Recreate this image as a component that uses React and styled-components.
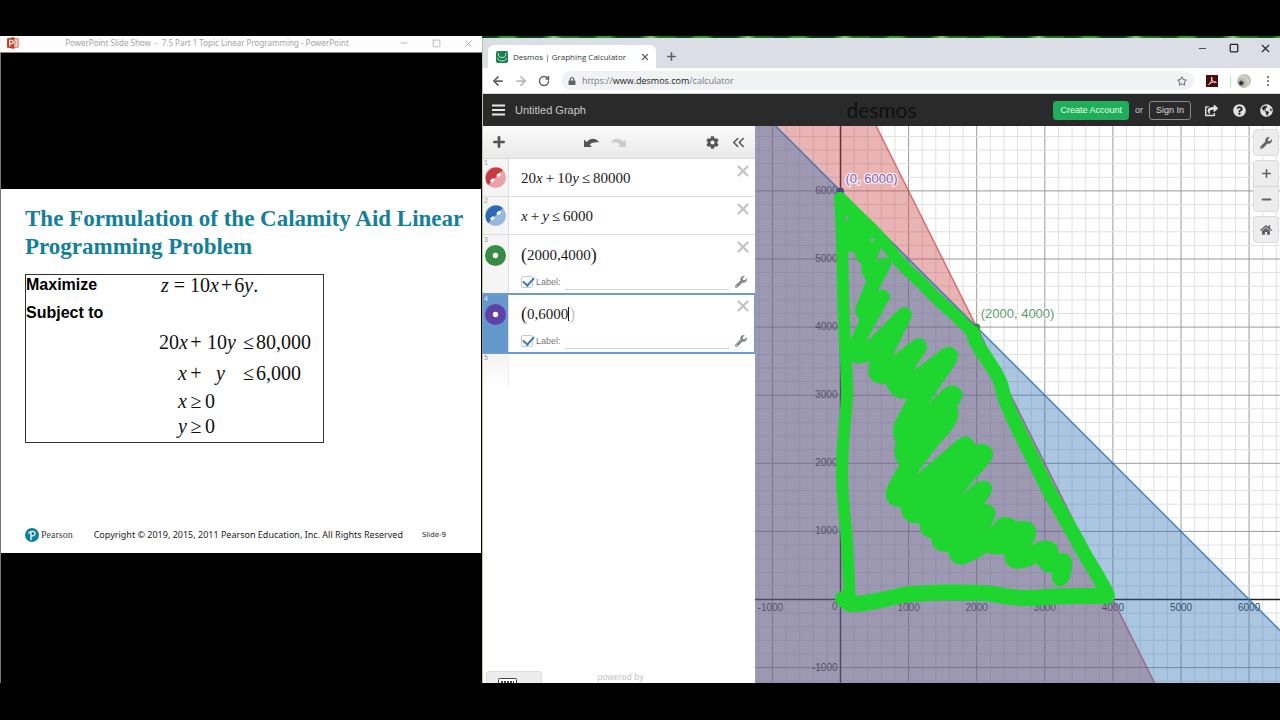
import React from 'react';
import styled, { createGlobalStyle, css } from 'styled-components';
import {
  FaCog,
  FaGlobeAmericas,
  FaHome,
  FaLock,
  FaQuestionCircle,
  FaRegStar,
  FaShareSquare,
  FaWrench,
} from 'react-icons/fa';
import { ArrowLeft, ArrowRight, ChevronsLeft, Minus, Plus, RotateCw, Square, X } from 'lucide-react';

const GlobalStyle = createGlobalStyle`
  * {
    box-sizing: border-box;
  }
  body {
    margin: 0;
    background: #000;
    font-family: 'Liberation Sans', Arial, sans-serif;
  }
  button {
    font-family: inherit;
    cursor: pointer;
  }
  svg {
    flex: none;
  }
`;

const uiFont = "'Noto Sans', 'Open Sans', sans-serif";
const mathFont = "'Liberation Serif', 'Times New Roman', serif";

/* ---------- shared ---------- */

const Screen = styled.div`
  display: flex;
  height: 100vh;
  padding: 36px 0 37px;
  overflow: hidden;
  background: #000;
`;

const IconButton = styled.button`
  display: flex;
  align-items: center;
  justify-content: center;
  flex: none;
  width: ${(p) => p.$w || 24}px;
  height: ${(p) => p.$h || 24}px;
  padding: 0;
  border: 0;
  background: transparent;
  color: ${(p) => p.$color || '#5f6368'};
`;

/* ---------- PowerPoint ---------- */

const SlideWindow = styled.section`
  display: flex;
  flex-direction: column;
  flex: 482 1 0;
  min-width: 0;
`;

const TitleBar = styled.header`
  display: flex;
  align-items: center;
  height: 17px;
  padding: 0 0 2px 7px;
  background: #fdfdfd;
  border-bottom: 1px solid #8a8a8a;
`;

const WindowTitle = styled.h1`
  flex: 1;
  margin: 0;
  padding-left: 5px;
  font: 400 8px/14px ${uiFont};
  color: #a3a3a3;
  text-align: center;
  white-space: pre;
`;

const WindowActions = styled.div`
  display: flex;
  width: 92px;
  justify-content: space-between;
`;

const Stage = styled.div`
  display: flex;
  flex: 1;
  flex-direction: column;
  justify-content: center;
  padding: 6px 1px 0 0;
  border-left: 1px solid #777;
`;

const Slide = styled.article`
  display: flex;
  flex-direction: column;
  height: 364px;
  padding: 16px 16px 8px 24px;
  background: #fff;
`;

const SlideTitle = styled.h2`
  margin: 0;
  font: 700 23px/28px ${mathFont};
  color: #13809a;
`;

const ProblemBox = styled.div`
  display: grid;
  grid-template-columns: 133px 1fr;
  grid-template-rows: 20px 35px 24px 38px 18px 32px;
  align-items: center;
  width: 299px;
  margin-top: 13px;
  border: 1px solid #333;
`;

const ProblemLabel = styled.strong`
  grid-column: 1;
  font-size: 16px;
  line-height: 20px;
  color: #000;
`;

const Formula = styled.div`
  grid-column: 2;
  padding-left: 2px;
  font: 400 20px/24px ${mathFont};
  color: #111;
`;

const Sign = styled.span`
  margin: 0 2px;
`;

const Constraint = styled(Formula)`
  display: grid;
  grid-template-columns: 28px 18px 31px 1fr;
  padding-left: 0;
`;

const Term = styled.span`
  text-align: ${(p) => p.$align || 'left'};
  padding-left: ${(p) => (p.$relation ? 5 : 0)}px;
  white-space: nowrap;
`;

const SlideFooter = styled.footer`
  display: flex;
  align-items: center;
  margin-top: auto;
  height: 20px;
  white-space: nowrap;
  color: #222;
`;

const PearsonName = styled.span`
  margin: 0 21px 0 2px;
  font: 400 10px/14px ${mathFont};
  color: #444;
`;

const Copyright = styled.span`
  font: 400 9px/12px ${uiFont};
`;

const SlideNumber = styled.span`
  margin-left: 19px;
  font: 400 7px/12px 'DejaVu Sans', sans-serif;
`;

/* ---------- browser chrome ---------- */

const BrowserWindow = styled.section`
  display: flex;
  flex-direction: column;
  flex: 798 1 0;
  min-width: 0;
`;

const Wallpaper = styled.div`
  flex: none;
  height: 2px;
  background: repeating-linear-gradient(90deg, #0d4a12 0 14px, #2f9a2c 20px 31px, #0b3a10 38px 60px, #7bcf6a 72px, #15701b 80px 97px);
`;

const TabStrip = styled.div`
  display: flex;
  align-items: flex-end;
  flex: none;
  height: 30px;
  padding-left: 5px;
  background: #dbdee6;
`;

const Tab = styled.div`
  display: flex;
  align-items: center;
  width: 168px;
  height: 23px;
  padding: 0 2px 0 8px;
  border-radius: 6px 6px 0 0;
  background: #fff;
  font: 400 8px/12px 'Open Sans', sans-serif;
  color: #35393d;
`;

const TabTitle = styled.span`
  flex: 1;
  margin-left: 5px;
  white-space: nowrap;
`;

const WindowButtons = styled.div`
  display: flex;
  align-self: flex-start;
  margin-left: auto;
`;

const AddressRow = styled.div`
  display: flex;
  align-items: center;
  flex: none;
  height: 26px;
  padding-left: 3px;
  background: #fff;
  border-bottom: 1px solid #d5d5d5;
`;

const AddressBar = styled.div`
  display: flex;
  align-items: center;
  flex: 1;
  height: 19px;
  margin: 0 6px;
  padding: 0 0 0 7px;
  border-radius: 10px;
  background: #f0f2f5;
  font: 400 9px/14px 'Open Sans', sans-serif;
  color: #777b80;
`;

const Url = styled.span`
  flex: 1;
  margin-left: 6px;

  b {
    font-weight: 400;
    color: #202124;
  }
`;

const Divider = styled.i`
  width: 1px;
  height: 12px;
  margin: 0 6px;
  background: #c9dccd;
`;

const Avatar = styled.button`
  width: 14px;
  height: 14px;
  margin-right: 5px;
  padding: 0;
  border: 0;
  border-radius: 50%;
  background: radial-gradient(circle at 30% 65%, #333 0 10%, #b5b5a8 22%, #d3d3c8 55%, #8f8f86);
`;

/* ---------- Desmos ---------- */

const Window = styled.div`
  display: flex;
  flex-direction: column;
  flex: 1;
  min-height: 0;
  border-left: 1px solid #b9cf98;
`;

const DesmosHeader = styled.header`
  display: grid;
  grid-template-columns: 1fr auto 1fr;
  align-items: center;
  flex: none;
  height: 32px;
  background: #2a2a2a;
`;

const HeaderSide = styled.div`
  display: flex;
  align-items: center;
  justify-content: ${(p) => (p.$end ? 'flex-end' : 'flex-start')};
  padding-left: ${(p) => (p.$end ? 0 : 3)}px;
  font-size: 9px;
  line-height: 12px;
  color: #ccc;
`;

const GraphName = styled.button`
  padding: 0;
  margin-left: 5px;
  border: 0;
  background: transparent;
  font-size: 11px;
  line-height: 16px;
  color: #c9c9c9;
`;

const Logo = styled.div`
  font: 400 21px/24px Lato, sans-serif;
  color: #101010;
`;

const HeaderButton = styled.button`
  height: 19px;
  margin: 0 7px 0 6px;
  padding: 0 6px;
  border: 1px solid #8a8a8a;
  border-radius: 3px;
  background: transparent;
  font-size: 9px;
  line-height: 12px;
  color: #ddd;
  white-space: nowrap;

  ${(p) =>
    p.$primary &&
    css`
      margin: 0 6px;
      border-color: #1fae59;
      background: #1fae59;
      color: #e8fff0;
    `}
`;

const Workspace = styled.main`
  display: flex;
  flex: 1;
  min-height: 0;
`;

const Panel = styled.aside`
  display: flex;
  flex-direction: column;
  flex: none;
  width: 272px;
  background: #fff;
`;

const PanelTools = styled.div`
  display: flex;
  align-items: center;
  height: 33px;
  padding: 0 4px;
  background: linear-gradient(#fbfbfb, #e9e9e9);
  border-bottom: 1px solid #dadada;
`;

const ToolGroup = styled.div`
  display: flex;
  flex: 1;
  justify-content: center;
`;

const Expressions = styled.ol`
  flex: 1;
  margin: 0;
  padding: 0;
  list-style: none;
`;

const Expression = styled.li`
  display: flex;
  border-bottom: 1px solid #dcdcdc;

  ${(p) =>
    p.$selected &&
    css`
      border-bottom-color: #6d9cc9;
      outline: 2px solid #6d9cc9;
      outline-offset: -1px;
    `}
`;

const Gutter = styled.div`
  display: flex;
  flex-direction: column;
  align-items: center;
  flex: none;
  width: 26px;
  border-right: 1px solid #ddd;
  background: ${(p) => (p.$selected ? '#6398cb' : '#f5f5f5')};
  color: ${(p) => (p.$selected ? '#e5effa' : '#999')};
`;

const Index = styled.span`
  align-self: flex-start;
  padding-left: 1px;
  font-size: 7px;
  line-height: ${(p) => (p.$tall ? 10 : 8)}px;
`;

const ExpressionBody = styled.div`
  display: flex;
  flex-direction: column;
  flex: 1;
  min-width: 0;
`;

const MathRow = styled.div`
  display: flex;
  align-items: center;
  min-height: ${(p) => (p.$tall ? 39 : 37)}px;
  padding-left: 12px;
  font: 400 15px/20px ${mathFont};
  color: #1a1a1a;
`;

const Operator = styled.span`
  margin: 0 3px;
`;

const Paren = styled.span`
  font-size: 18px;
  line-height: 20px;
  color: ${(p) => (p.$ghost ? '#ccc' : 'inherit')};
`;

const Cursor = styled.i`
  width: 1px;
  height: 14px;
  background: #111;
`;

const DeleteButton = styled(IconButton)`
  align-self: flex-start;
  margin-left: auto;
`;

const LabelRow = styled.div`
  display: flex;
  align-items: center;
  height: 19px;
  padding: 0 2px 4px 12px;
  font-size: 9px;
  line-height: 12px;
  color: #777;
`;

const CheckLabel = styled.label`
  display: flex;
  align-items: center;
  gap: 3px;
`;

const Checkbox = styled.input`
  appearance: none;
  display: grid;
  place-items: center;
  width: 12px;
  height: 12px;
  margin: 0;
  border: 1px solid #c4ccd4;
  border-radius: 2px;
  background: #fff;

  &:checked::before {
    content: '';
    width: 5px;
    height: 9px;
    border: solid #3c78b4;
    border-width: 0 2px 2px 0;
    transform: translate(1px, -2px) rotate(42deg);
  }
`;

const LabelInput = styled.input`
  flex: 1;
  align-self: flex-start;
  min-width: 0;
  height: 16px;
  margin: 0 0 0 4px;
  padding: 0;
  border: 0;
  border-bottom: 1px solid #d0d0d0;
  outline: 0;
`;

const NextRow = styled.li`
  display: flex;
  height: 34px;
  padding-top: 1px;
`;

const FadingGutter = styled(Gutter)`
  background: linear-gradient(#f3f3f3, #fff);
  border-right-color: #eee;
`;

const PanelFooter = styled.footer`
  display: grid;
  grid-template-columns: 1fr auto 1fr;
  flex: none;
  height: 12px;
  padding-left: 3px;
  overflow: hidden;
  font-size: 9px;
  line-height: 12px;
  color: #c4c4c4;
`;

const KeypadButton = styled.button`
  display: flex;
  justify-content: center;
  width: 56px;
  height: 28px;
  padding: 6px 14px 0 0;
  border: 1px solid #ddd;
  border-radius: 3px;
  background: #ececec;
`;

const GraphArea = styled.div`
  position: relative;
  flex: 1;
  min-width: 0;
  background: #fff;
`;

const GraphSvg = styled.svg`
  display: block;
  width: 100%;
  height: 100%;
  font-family: 'Liberation Sans', Arial, sans-serif;
`;

const GraphControls = styled.div`
  position: absolute;
  top: 3px;
  right: 1px;
  display: flex;
  flex-direction: column;
  gap: 4px;
`;

const ControlGroup = styled.div`
  border: 1px solid #dcdcdc;
  border-radius: 4px;
  background: #ededed;
  overflow: hidden;

  button + button {
    border-top: 1px solid #d6d6d6;
  }
`;

/* ---------- drawings ---------- */

const PowerPointIcon = () => (
  <svg width='12' height='12' viewBox='0 0 13 13'>
    <path d='M7 2h5v9H7z' fill='#fff' stroke='#cf4b2a' />
    <path d='M8.5 4.5h2M8.5 6.5h2M8.5 8.5h2' stroke='#cf4b2a' />
    <path d='M0 1.6 8 0v13L0 11.4z' fill='#c8401f' />
    <path d='M3 10V3.5h1.8a1.8 1.8 0 0 1 0 3.8H3' fill='none' stroke='#fff' strokeWidth='1.3' />
  </svg>
);

const PearsonIcon = () => (
  <svg width='14' height='14' viewBox='0 0 14 14'>
    <circle cx='7' cy='7' r='7' fill='#0f7f9c' />
    <path d='M6 11.5V5M3.8 5.2C5 3 9.8 2.4 10 5.4c.1 2.2-2.4 2.8-4 2.4' fill='none' stroke='#fff' strokeWidth='1.3' strokeLinecap='round' />
  </svg>
);

const DesmosIcon = () => (
  <svg width='12' height='12' viewBox='0 0 12 12'>
    <rect width='12' height='12' rx='2' fill='#1b7f4f' />
    <path d='M2 2c.5 3.500 1.500 4.500 4 4.500S9.500 5.500 10 2M1.500 7C2.500 9.500 4 10 6 10s3.500-.5 4.500-3' fill='none' stroke='#c5efd9' />
  </svg>
);

const AcrobatIcon = () => (
  <svg width='12' height='12' viewBox='0 0 12 12'>
    <rect width='12' height='12' fill='#4a0c0c' />
    <path d='M2.500 9.500c2-1 3.600-4 3.600-6.500 0-1-.8-1-.8 0C5.300 5 7.500 7.500 9.800 7.600c.8 0 .7-.8-.3-.8-2.500 0-5 .7-7 2.700' fill='none' stroke='#f3dcdc' />
  </svg>
);

const DotsIcon = () => (
  <svg width='4' height='12' viewBox='0 0 4 12' fill='#5f6368'>
    <circle cx='2' cy='2' r='1.1' />
    <circle cx='2' cy='6' r='1.1' />
    <circle cx='2' cy='10' r='1.1' />
  </svg>
);

const MenuIcon = () => (
  <svg width='13' height='12' viewBox='0 0 13 12'>
    <path d='M0 1.5h13M0 6h13M0 10.5h13' stroke='#e8e8e8' strokeWidth='1.8' />
  </svg>
);

const UndoIcon = ({ flip }) => (
  <svg width='15' height='11' viewBox='0 0 15 11'>
    <path
      d='M0 2.500V10h8L5.600 7.600C8 5.600 11 4.800 15 5.400 12.500 1 7 .5 2.600 4.900z'
      fill='currentColor'
      transform={flip ? 'matrix(-1 0 0 1 15 0)' : undefined}
    />
  </svg>
);

const KeypadIcon = () => (
  <svg width='19' height='13' viewBox='0 0 19 13'>
    <rect x='.5' y='.5' width='18' height='12' rx='1' fill='#fff' stroke='#444' />
    <path d='M3 4h13M3 7h13' stroke='#444' strokeWidth='2' strokeDasharray='2 1' />
  </svg>
);

const InequalityIcon = ({ color, shade }) => (
  <svg width='21' height='21' viewBox='0 0 21 21'>
    <circle cx='10.5' cy='10.5' r='10.5' fill={shade} />
    <path d='M3.1 17.9A10.5 10.5 0 0 1 17.9 3.1z' fill={color} />
    <path d='M5.8 14.6 9 12M12.2 9.200l3.200-2.600' stroke='#fff' strokeWidth='2.800' />
  </svg>
);

const PointIcon = ({ color }) => (
  <svg width='21' height='21' viewBox='0 0 21 21'>
    <circle cx='10.5' cy='10.5' r='10.5' fill={color} />
    <circle cx='10.5' cy='10.5' r='2.7' fill='#fff' />
  </svg>
);

/* ---------- graph ---------- */

const ORIGIN = { x: 85.5, y: 473.5 };
const UNIT = 68.1; // pixels per 1000

const toX = (v) => ORIGIN.x + (v / 1000) * UNIT;
const toY = (v) => ORIGIN.y - (v / 1000) * UNIT;
const range = (from, to, step) => {
  const out = [];
  for (let v = from; v <= to; v += step) out.push(v);
  return out;
};

// hand-drawn marker strokes
const leftEdge = 'M840 198C843 230 842 280 844 320C845 350 847 370 847 395C846 420 842 440 842 475C842 500 846 520 847 545L850 602';
const bottomEdge = 'M843 599L850 604C868 604 882 600 903 595C925 592 955 592 981 593C1000 594 1010 599 1035 598C1055 595 1080 596 1107 596';
const topEdge = 'M840 198L857 215L873 230L885 243L897 259C910 274 922 282 930 292C938 300 945 307 953 313L973 333C975 345 983 352 988 361';
const rightEdge = 'M973 333C975 345 983 352 988 361C996 372 1002 382 1003 393C1006 405 1016 425 1025 443L1049 491L1077 540C1088 562 1098 575 1107 593';

const scribble =
  'M15 20Q30 0 50 20L75 52Q97 55 105 85L155 160L148 190L135 218Q165 195 178 207Q188 214 181 232L145 300Q180 294 180 325L105 460L205 360' +
  'Q225 340 243 363Q248 378 240 392L188 498L255 447Q285 437 291 468Q290 485 275 502L250 542L340 475Q368 460 384 490Q387 505 375 525' +
  'L295 640L345 593Q385 575 397 610Q398 630 382 648Q391 680 375 705Q360 730 325 765L258 855L385 748Q415 725 438 765Q480 754 490 790' +
  'Q488 812 465 835L390 917L440 877Q477 862 486 893Q487 912 462 942Q495 940 497 972Q492 1000 470 1025L505 987Q530 972 560 995' +
  'Q605 985 618 1018Q622 1040 603 1067Q655 1035 682 1068L685 1090Q722 1083 728 1118L720 1165Q705 1195 680 1187Q660 1175 668 1148' +
  'Q635 1150 620 1118Q600 1132 568 1136Q525 1138 522 1092Q490 1095 470 1088Q430 1115 395 1124Q358 1120 354 1085Q308 1090 303 1045' +
  'Q270 1040 268 998Q220 1008 212 952Q165 950 167 905Q175 880 208 825Q185 800 198 755Q183 735 193 700L232 624Q190 635 168 582' +
  'Q120 585 115 545L118 512Q80 530 60 510L60 455L88 388Q70 370 78 348L110 270Q93 260 93 220Q75 210 73 185L40 185z';

const Graph = () => (
  <GraphSvg viewBox='0 0 525 557' preserveAspectRatio='xMinYMin slice' role='img' aria-label='Graph'>
    {range(-1200, 6600, 200).map((v) => (
      <path key={`x${v}`} d={`M${toX(v)} 0V557`} stroke={v % 1000 ? '#e0e0e0' : '#9a9a9a'} />
    ))}
    {range(-1200, 6800, 200).map((v) => (
      <path key={`y${v}`} d={`M0 ${toY(v)}H525`} stroke={v % 1000 ? '#e0e0e0' : '#9a9a9a'} />
    ))}
    <path d={`M${ORIGIN.x} 0V557M0 ${ORIGIN.y}H525`} stroke='#222' strokeWidth='1.5' />

    <g fontSize='10' fill='#333'>
      {range(1000, 6000, 1000).map((v) => (
        <React.Fragment key={v}>
          <text x={toX(v)} y={ORIGIN.y + 11} textAnchor='middle'>{v}</text>
          <text x={ORIGIN.x - 3} y={toY(v) + 3} textAnchor='end'>{v}</text>
        </React.Fragment>
      ))}
      <text x={toX(-1000) - 2} y={ORIGIN.y + 11} textAnchor='middle'>-1000</text>
      <text x={ORIGIN.x - 3} y={toY(-1000) + 3} textAnchor='end'>-1000</text>
      <text x={ORIGIN.x - 3} y={ORIGIN.y + 10} textAnchor='end'>0</text>
    </g>

    <path
      d={`M${toX(400)} ${toY(7200)}L${toX(4800)} ${toY(-1600)}H-10V${toY(7200)}z`}
      fill='#c74440'
      fillOpacity='.4'
      stroke='#c74440'
      strokeOpacity='.7'
      strokeWidth='1.5'
    />
    <path
      d={`M${toX(-1400)} ${toY(7400)}L${toX(7600)} ${toY(-1600)}H-10z`}
      fill='#2d70b3'
      fillOpacity='.4'
      stroke='#2d70b3'
      strokeOpacity='.8'
      strokeWidth='1.5'
    />

    <circle cx={toX(0)} cy={toY(6000)} r='3.5' fill='#5a3a9c' />
    <circle cx={toX(2000)} cy={toY(4000)} r='3.5' fill='#388c46' />
    <g fontSize='13' stroke='#fff' strokeWidth='2.5' strokeOpacity='.8' paintOrder='stroke' strokeLinejoin='round'>
      <text x={toX(0) + 5} y={toY(6000) - 8} fill='#7d62b5'>(0, 6000)</text>
      <text x={toX(2000) + 4} y={toY(4000) - 9} fill='#5b9c68'>(2000, 4000)</text>
    </g>

    <g transform='translate(-755 -126)' fill='none' stroke='#1fd630' strokeLinecap='round' strokeLinejoin='round'>
      <path d={leftEdge} strokeWidth='12' />
      <path d={bottomEdge} strokeWidth='16' />
      <path d={topEdge} strokeWidth='12' />
      <path d={rightEdge} strokeWidth='14' />
    </g>
    <g transform='translate(75 64) scale(.3333)'>
      <path d={scribble} fill='#1fd630' />
      <ellipse cx='50' cy='85' rx='3' ry='9' fill='#9d97b3' />
      <ellipse cx='128' cy='149' rx='7' ry='5' fill='#9d97b3' />
    </g>
  </GraphSvg>
);

/* ---------- data ---------- */

const expressions = [
  {
    icon: <InequalityIcon color='#c53b3f' shade='#e9a3a6' />,
    math: (
      <>
        20<em>x</em>
        <Operator>+</Operator>10<em>y</em>
        <Operator>≤</Operator>80000
      </>
    ),
  },
  {
    icon: <InequalityIcon color='#2d69b0' shade='#97b9de' />,
    math: (
      <>
        <em>x</em>
        <Operator>+</Operator>
        <em>y</em>
        <Operator>≤</Operator>6000
      </>
    ),
  },
  {
    icon: <PointIcon color='#388c46' />,
    labelled: true,
    math: (
      <>
        <Paren>(</Paren>2000,4000<Paren>)</Paren>
      </>
    ),
  },
  {
    icon: <PointIcon color='#6042a6' />,
    labelled: true,
    selected: true,
    math: (
      <>
        <Paren>(</Paren>0,6000
        <Cursor />
        <Paren $ghost>)</Paren>
      </>
    ),
  },
];

const PowerPoint = () => (
  <SlideWindow>
    <TitleBar>
      <PowerPointIcon />
      <WindowTitle>{'PowerPoint Slide Show  -  7.5 Part 1 Topic Linear Programming - PowerPoint'}</WindowTitle>
      <WindowActions>
        <IconButton $w={28} $h={14} $color='#aaa' aria-label='Minimize'><Minus size={10} strokeWidth={2} /></IconButton>
        <IconButton $w={28} $h={14} $color='#aaa' aria-label='Maximize'><Square size={9} strokeWidth={2} /></IconButton>
        <IconButton $w={28} $h={14} $color='#aaa' aria-label='Close'><X size={11} strokeWidth={2} /></IconButton>
      </WindowActions>
    </TitleBar>
    <Stage>
      <Slide>
        <SlideTitle>
          The Formulation of the Calamity Aid Linear
          <br />
          Programming Problem
        </SlideTitle>
        <ProblemBox>
          <ProblemLabel>Maximize</ProblemLabel>
          <Formula><em>z</em> = 10<em>x</em><Sign>+</Sign>6<em>y</em>.</Formula>
          <ProblemLabel>Subject to</ProblemLabel>
          <Constraint />
          <Constraint>
            <Term $align='right'>20<em>x</em></Term>
            <Term $align='center'>+</Term>
            <Term $align='right'>10<em>y</em></Term>
            <Term $relation><Sign>≤</Sign>80,000</Term>
          </Constraint>
          <Constraint>
            <Term $align='right'><em>x</em></Term>
            <Term $align='center'>+</Term>
            <Term $align='center'><em>y</em></Term>
            <Term $relation><Sign>≤</Sign>6,000</Term>
          </Constraint>
          <Constraint>
            <Term $align='right'><em>x</em></Term>
            <Term $align='center'>≥</Term>
            <Term>0</Term>
          </Constraint>
          <Constraint>
            <Term $align='right'><em>y</em></Term>
            <Term $align='center'>≥</Term>
            <Term>0</Term>
          </Constraint>
        </ProblemBox>
        <SlideFooter>
          <PearsonIcon />
          <PearsonName>Pearson</PearsonName>
          <Copyright>Copyright © 2019, 2015, 2011 Pearson Education, Inc. All Rights Reserved</Copyright>
          <SlideNumber>Slide-9</SlideNumber>
        </SlideFooter>
      </Slide>
    </Stage>
  </SlideWindow>
);

const Desmos = () => (
  <>
    <DesmosHeader>
      <HeaderSide>
        <IconButton aria-label='Menu'><MenuIcon /></IconButton>
        <GraphName>Untitled Graph</GraphName>
      </HeaderSide>
      <Logo>desmos</Logo>
      <HeaderSide $end>
        <HeaderButton $primary>Create Account</HeaderButton>
        or
        <HeaderButton>Sign In</HeaderButton>
        <IconButton $w={27} $color='#e0e0e0' aria-label='Share'><FaShareSquare size={13} /></IconButton>
        <IconButton $w={28} $color='#e0e0e0' aria-label='Help'><FaQuestionCircle size={13} /></IconButton>
        <IconButton $w={27} $color='#e0e0e0' aria-label='Language'><FaGlobeAmericas size={13} /></IconButton>
      </HeaderSide>
    </DesmosHeader>
    <Workspace>
      <Panel>
        <PanelTools>
          <IconButton $color='#555' aria-label='Add item'><Plus size={16} strokeWidth={4} /></IconButton>
          <ToolGroup>
            <IconButton $w={27} $color='#555' aria-label='Undo'><UndoIcon /></IconButton>
            <IconButton $w={27} $color='#ccc' aria-label='Redo'><UndoIcon flip /></IconButton>
          </ToolGroup>
          <IconButton $w={26} $color='#555' aria-label='Edit list'><FaCog size={13} /></IconButton>
          <IconButton $w={26} $color='#555' aria-label='Hide list'><ChevronsLeft size={19} /></IconButton>
        </PanelTools>
        <Expressions>
          {expressions.map((item, i) => (
            <Expression key={i} $selected={item.selected}>
              <Gutter $selected={item.selected}>
                <Index $tall={item.labelled}>{i + 1}</Index>
                {item.icon}
              </Gutter>
              <ExpressionBody>
                <MathRow $tall={item.labelled}>
                  {item.math}
                  <DeleteButton $color='#c4c4c4' aria-label='Delete'><X size={18} strokeWidth={3} /></DeleteButton>
                </MathRow>
                {item.labelled && (
                  <LabelRow>
                    <CheckLabel>
                      <Checkbox type='checkbox' defaultChecked />
                      Label:
                    </CheckLabel>
                    <LabelInput aria-label='Label text' />
                    <IconButton $h={16} $color='#888' aria-label='Label options'><FaWrench size={12} /></IconButton>
                  </LabelRow>
                )}
              </ExpressionBody>
            </Expression>
          ))}
          <NextRow>
            <FadingGutter><Index>5</Index></FadingGutter>
          </NextRow>
        </Expressions>
        <PanelFooter>
          <KeypadButton aria-label='Show keypad'><KeypadIcon /></KeypadButton>
          powered by
        </PanelFooter>
      </Panel>
      <GraphArea>
        <Graph />
        <GraphControls>
          <ControlGroup>
            <IconButton $w={24} $h={25} aria-label='Graph settings'><FaWrench size={12} /></IconButton>
          </ControlGroup>
          <ControlGroup>
            <IconButton $w={24} $h={25} aria-label='Zoom in'><Plus size={13} strokeWidth={3} /></IconButton>
            <IconButton $w={24} $h={25} aria-label='Zoom out'><Minus size={13} strokeWidth={4} /></IconButton>
          </ControlGroup>
          <ControlGroup>
            <IconButton $w={24} $h={25} aria-label='Default view'><FaHome size={12} /></IconButton>
          </ControlGroup>
        </GraphControls>
      </GraphArea>
    </Workspace>
  </>
);

const Browser = () => (
  <BrowserWindow>
    <Wallpaper />
    <Window>
      <TabStrip>
        <Tab>
          <DesmosIcon />
          <TabTitle>Desmos | Graphing Calculator</TabTitle>
          <IconButton $w={18} $h={18} aria-label='Close tab'><X size={10} strokeWidth={3} /></IconButton>
        </Tab>
        <IconButton $w={30} aria-label='New tab'><Plus size={13} strokeWidth={3} /></IconButton>
        <WindowButtons>
          <IconButton $w={32} $h={20} $color='#444' aria-label='Minimize'><Minus size={11} strokeWidth={2} /></IconButton>
          <IconButton $w={32} $h={20} $color='#222' aria-label='Maximize'><Square size={10} strokeWidth={3} /></IconButton>
          <IconButton $w={30} $h={20} $color='#222' aria-label='Close'><X size={13} strokeWidth={2} /></IconButton>
        </WindowButtons>
      </TabStrip>
      <AddressRow>
        <IconButton $w={23} aria-label='Back'><ArrowLeft size={14} strokeWidth={3} /></IconButton>
        <IconButton $w={23} $color='#b5b8bc' aria-label='Forward'><ArrowRight size={14} strokeWidth={3} /></IconButton>
        <IconButton $w={23} aria-label='Reload'><RotateCw size={12} strokeWidth={3} /></IconButton>
        <AddressBar>
          <FaLock size={8} color='#5f6368' />
          <Url>https://<b>www.desmos.com</b>/calculator</Url>
          <IconButton aria-label='Bookmark'><FaRegStar size={10} /></IconButton>
        </AddressBar>
        <IconButton aria-label='Acrobat'><AcrobatIcon /></IconButton>
        <Divider />
        <Avatar aria-label='Profile' />
        <IconButton aria-label='More'><DotsIcon /></IconButton>
      </AddressRow>
      <Desmos />
    </Window>
  </BrowserWindow>
);

const App = () => (
  <Screen>
    <GlobalStyle />
    <PowerPoint />
    <Browser />
  </Screen>
);

export default App;
